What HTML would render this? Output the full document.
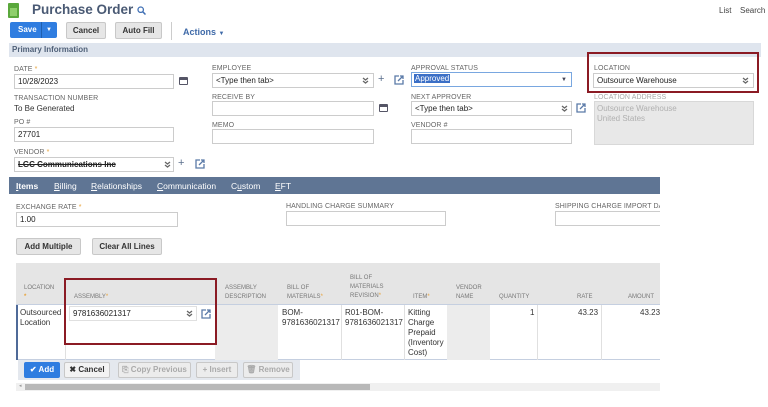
<!DOCTYPE html>
<html><head><meta charset="utf-8"><style>
*{box-sizing:border-box;margin:0;padding:0}
body{width:768px;height:407px;background:#fff;font-family:"Liberation Sans",sans-serif;position:relative;overflow:hidden;color:#333}
.a{position:absolute}
.lbl{position:absolute;font-size:7px;line-height:9px;color:#666;text-transform:uppercase;letter-spacing:.1px;white-space:nowrap}
.lbl b{color:#e8a33a;font-weight:normal;font-size:7px}
.inp{position:absolute;border:1px solid #ccc;background:#fff;height:15px;font-size:8px;color:#222;padding:2px 3px;white-space:nowrap;overflow:hidden}
.btn{position:absolute;background:#e6e6e6;border:1px solid #c8c8c8;border-radius:2px;font-size:8px;font-weight:bold;color:#333;text-align:center;line-height:15px;height:17px}
.dd{position:absolute;width:7px;height:7px}
.ic{position:absolute;font-size:11px;color:#5a6e8c;line-height:10px}
.cal{position:absolute;width:9px;height:8px;border:1px solid #556;border-top:3px solid #556;border-radius:1px}
.ext{position:absolute;width:10px;height:10px}
.th{position:absolute;font-size:6px;color:#777;text-transform:uppercase;line-height:9px}
.td{position:absolute;font-size:8px;color:#333;line-height:10px}
</style></head><body>
<svg width="0" height="0" style="position:absolute"><defs>
<symbol id="dd" viewBox="0 0 7 7"><path d="M1 1l2.5 2 2.5-2M1 4l2.5 2 2.5-2" fill="none" stroke="#666" stroke-width="1.3"/></symbol>
<symbol id="ex" viewBox="0 0 10 10"><path d="M5 1H1v8h8V5" fill="none" stroke="#5a7aa8" stroke-width="1.3"/><path d="M4 6l5-5M6 1h3v3" fill="none" stroke="#5a7aa8" stroke-width="1.3"/></symbol>
</defs></svg>
<div class="a" style="left:8px;top:3px;width:11px;height:15px;background:#5aa83c;border-radius:1px"></div>
<div class="a" style="left:10px;top:8px;width:7px;height:8px;background:#8fcf6c"></div>
<div class="a" style="left:32px;top:2px;font-size:13.5px;font-weight:bold;color:#4a5a74">Purchase Order</div>
<svg class="a" style="left:137px;top:6px" width="9" height="9" viewBox="0 0 9 9"><circle cx="3.7" cy="3.7" r="2.7" fill="none" stroke="#3f6fb4" stroke-width="1.3"/><path d="M5.7 5.7L8.5 8.5" stroke="#3f6fb4" stroke-width="1.5"/></svg>
<div class="a" style="left:719px;top:6px;font-size:8px;color:#444">List</div>
<div class="a" style="left:740px;top:6px;font-size:8px;color:#444">Search</div>

<div class="a" style="left:10px;top:22px;width:47px;height:16px;background:#2f7de0;border-radius:2px;color:#fff;font-size:8px;font-weight:bold;line-height:16px;padding-left:8px">Save</div>
<div class="a" style="left:41px;top:22px;width:1px;height:16px;background:#1d5fb0"></div>
<div class="a" style="left:46px;top:22px;font-size:6px;color:#fff;line-height:16px">▼</div>
<div class="btn" style="left:66px;top:22px;width:40px">Cancel</div>
<div class="btn" style="left:115px;top:22px;width:47px">Auto Fill</div>
<div class="a" style="left:171px;top:22px;width:1px;height:18px;background:#ccc"></div>
<div class="a" style="left:183px;top:27px;font-size:9px;font-weight:bold;color:#3f6aa8">Actions <span style="font-size:6px">▼</span></div>

<div class="a" style="left:9px;top:43px;width:752px;height:14px;background:#dfe5ee"></div>
<div class="a" style="left:12px;top:45px;font-size:8px;font-weight:bold;color:#4f6078">Primary Information</div>

<div class="lbl" style="left:14px;top:65px">Date <b>*</b></div>
<div class="inp" style="left:14px;top:74px;width:160px">10/28/2023</div>
<div class="cal" style="left:179px;top:77px"></div>
<div class="lbl" style="left:14px;top:94px">Transaction Number</div>
<div class="a" style="left:14px;top:104px;font-size:8px">To Be Generated</div>
<div class="lbl" style="left:14px;top:118px">PO #</div>
<div class="inp" style="left:14px;top:127px;width:160px">27701</div>
<div class="lbl" style="left:14px;top:148px">Vendor <b>*</b></div>
<div class="inp" style="left:14px;top:157px;width:160px"><span style="text-decoration:line-through;font-weight:bold;color:#222">LGC Communications Inc</span></div>
<svg class="dd" style="left:164px;top:161px"><use href="#dd"/></svg>
<div class="ic" style="left:178px;top:158px">+</div>
<svg class="ext" style="left:195px;top:159px"><use href="#ex"/></svg>

<div class="lbl" style="left:212px;top:64px">Employee</div>
<div class="inp" style="left:212px;top:73px;width:162px">&lt;Type then tab&gt;</div>
<svg class="dd" style="left:362px;top:77px"><use href="#dd"/></svg>
<div class="ic" style="left:378px;top:74px">+</div>
<svg class="ext" style="left:394px;top:75px"><use href="#ex"/></svg>
<div class="lbl" style="left:212px;top:93px">Receive By</div>
<div class="inp" style="left:212px;top:101px;width:162px"></div>
<div class="cal" style="left:379px;top:104px"></div>
<div class="lbl" style="left:212px;top:121px">Memo</div>
<div class="inp" style="left:212px;top:129px;width:162px"></div>

<div class="lbl" style="left:411px;top:64px">Approval Status</div>
<div class="inp" style="left:411px;top:72px;width:161px;border-color:#79a7e0;padding:1px 2px"><span style="background:#3b6fc6;color:#fff;padding:0 1px">Approved</span></div>
<div class="a" style="left:561px;top:77px;font-size:6px;color:#445">▼</div>
<div class="lbl" style="left:411px;top:93px">Next Approver</div>
<div class="inp" style="left:411px;top:101px;width:161px">&lt;Type then tab&gt;</div>
<svg class="dd" style="left:561px;top:105px"><use href="#dd"/></svg>
<svg class="ext" style="left:576px;top:103px"><use href="#ex"/></svg>
<div class="lbl" style="left:411px;top:121px">Vendor #</div>
<div class="inp" style="left:411px;top:129px;width:161px"></div>

<div class="a" style="left:587px;top:52px;width:172px;height:41px;border:2px solid #8b1b24"></div>
<div class="lbl" style="left:594px;top:64px">Location</div>
<div class="inp" style="left:593px;top:73px;width:161px">Outsource Warehouse</div>
<svg class="dd" style="left:742px;top:77px"><use href="#dd"/></svg>
<div class="lbl" style="left:594px;top:93px;color:#aaa">Location Address</div>
<div class="a" style="left:594px;top:101px;width:160px;height:44px;background:#e8e8e8;border:1px solid #d8d8d8;font-size:8px;color:#b0b0b0;padding:2px;line-height:10px">Outsource Warehouse<br>United States</div>

<div class="a" style="left:9px;top:177px;width:651px;height:17px;background:#5f7594"></div>
<div class="a" style="left:16px;top:181px;font-size:8.5px;color:#fff"><b style="text-decoration:underline">I</b><b>tems</b></div>
<div class="a" style="left:54px;top:181px;font-size:8.5px;color:#fff"><u>B</u>illing</div>
<div class="a" style="left:91px;top:181px;font-size:8.5px;color:#fff"><u>R</u>elationships</div>
<div class="a" style="left:157px;top:181px;font-size:8.5px;color:#fff"><u>C</u>ommunication</div>
<div class="a" style="left:231px;top:181px;font-size:8.5px;color:#fff">C<u>u</u>stom</div>
<div class="a" style="left:275px;top:181px;font-size:8.5px;color:#fff"><u>E</u>FT</div>

<div class="lbl" style="left:16px;top:203px">Exchange Rate <b>*</b></div>
<div class="inp" style="left:16px;top:212px;width:162px">1.00</div>
<div class="lbl" style="left:286px;top:202px">Handling Charge Summary</div>
<div class="inp" style="left:286px;top:211px;width:160px"></div>
<div class="lbl" style="left:555px;top:202px;width:105px;overflow:hidden">Shipping Charge Import Date</div>
<div class="inp" style="left:555px;top:211px;width:105px;border-right:none"></div>

<div class="btn" style="left:16px;top:238px;width:65px">Add Multiple</div>
<div class="btn" style="left:92px;top:238px;width:70px">Clear All Lines</div>

<div class="a" style="left:16px;top:263px;width:644px;height:42px;background:#e5e5e5"></div>
<div class="a" style="left:16px;top:304px;width:644px;height:1px;background:#c5cfe0"></div>
<div class="a" style="left:16px;top:305px;width:644px;height:55px;background:#fff;border-bottom:1px solid #c5cfe0"></div>
<div class="a" style="left:16px;top:305px;width:2px;height:55px;background:#4f6a98"></div>
<div class="a" style="left:65px;top:305px;width:1px;height:55px;background:#e0e0e0"></div>
<div class="a" style="left:215px;top:305px;width:63px;height:55px;background:#ececec"></div>
<div class="a" style="left:341px;top:305px;width:1px;height:55px;background:#e0e0e0"></div>
<div class="a" style="left:404px;top:305px;width:1px;height:55px;background:#e0e0e0"></div>
<div class="a" style="left:447px;top:305px;width:43px;height:55px;background:#ececec"></div>
<div class="a" style="left:537px;top:305px;width:1px;height:55px;background:#e0e0e0"></div>
<div class="a" style="left:601px;top:305px;width:1px;height:55px;background:#e0e0e0"></div>

<div class="th" style="left:24px;top:284px">Location<br><b style="color:#e8a33a">*</b></div>
<div class="th" style="left:74px;top:293px">Assembly<span style="color:#e8a33a">*</span></div>
<div class="th" style="left:225px;top:284px">Assembly<br>Description</div>
<div class="th" style="left:287px;top:284px">Bill of<br>Materials<span style="color:#e8a33a">*</span></div>
<div class="th" style="left:350px;top:274px">Bill of<br>Materials<br>Revision<span style="color:#e8a33a">*</span></div>
<div class="th" style="left:413px;top:293px">Item<span style="color:#e8a33a">*</span></div>
<div class="th" style="left:456px;top:284px">Vendor<br>Name</div>
<div class="th" style="left:499px;top:293px">Quantity</div>
<div class="th" style="left:577px;top:293px">Rate</div>
<div class="th" style="left:628px;top:293px">Amount</div>

<div class="td" style="left:20px;top:308px">Outsourced<br>Location</div>
<div class="inp" style="left:69px;top:306px;width:128px;border-color:#e0e0e0">9781636021317</div>
<svg class="dd" style="left:186px;top:310px"><use href="#dd"/></svg>
<svg class="ext" style="left:201px;top:309px"><use href="#ex"/></svg>
<div class="td" style="left:282px;top:308px">BOM-<br>9781636021317</div>
<div class="td" style="left:345px;top:308px">R01-BOM-<br>9781636021317</div>
<div class="td" style="left:408px;top:308px">Kitting<br>Charge<br>Prepaid<br>(Inventory<br>Cost)</div>
<div class="td" style="left:530px;top:308px">1</div>
<div class="td" style="left:578px;top:308px">43.23</div>
<div class="td" style="left:640px;top:308px">43.23</div>

<div class="a" style="left:64px;top:278px;width:153px;height:67px;border:2px solid #8b1b24"></div>

<div class="a" style="left:18px;top:360px;width:282px;height:20px;background:#e4e8ee"></div>
<div class="a" style="left:24px;top:362px;width:36px;height:16px;background:#2f7de0;border-radius:2px;color:#fff;font-size:8px;font-weight:bold;line-height:16px;text-align:center">✔ Add</div>
<div class="btn" style="left:64px;top:362px;width:46px;height:16px;line-height:14px;background:#f3f3f3">✖ Cancel</div>
<div class="btn" style="left:118px;top:362px;width:73px;height:16px;line-height:14px;color:#aaa;background:#ececec">⎘ Copy Previous</div>
<div class="btn" style="left:196px;top:362px;width:42px;height:16px;line-height:14px;color:#aaa;background:#ececec">+ Insert</div>
<div class="btn" style="left:243px;top:362px;width:50px;height:16px;line-height:14px;color:#aaa;background:#ececec">🗑&#xFE0E; Remove</div>

<div class="a" style="left:16px;top:383px;width:644px;height:8px;background:#f0f0f0"></div>
<div class="a" style="left:25px;top:384px;width:345px;height:6px;background:#b8b8b8"></div>
<div class="a" style="left:19px;top:383px;font-size:5px;color:#999">◂</div>
</body></html>
